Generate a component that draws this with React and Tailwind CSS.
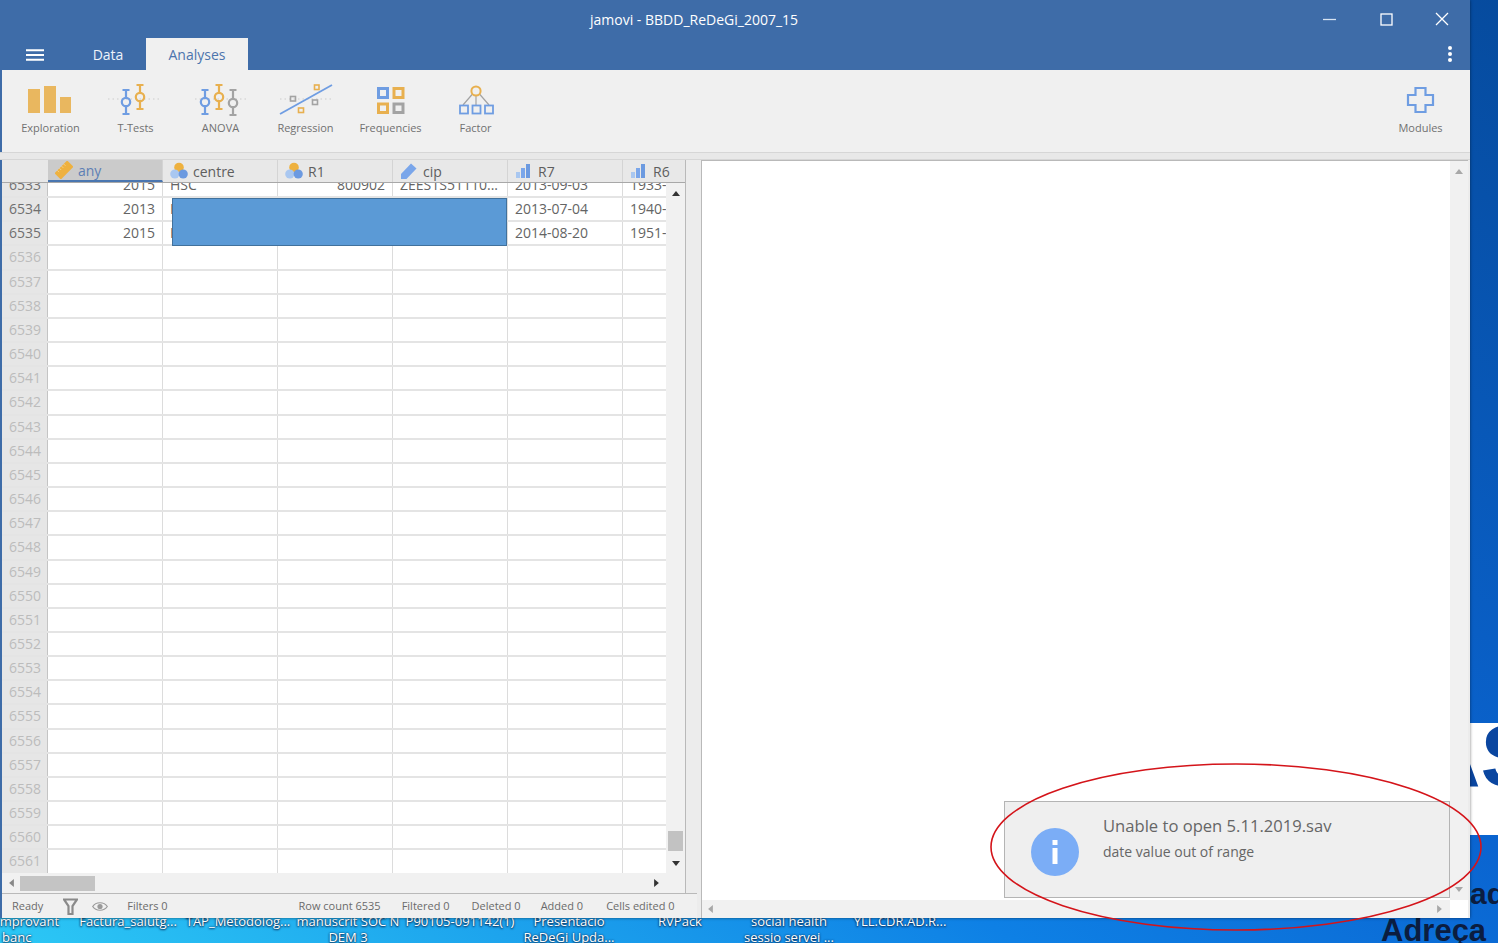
import React from 'react';

const uiFont = 'font-["Open_Sans","Noto_Sans",sans-serif]';

const columns = [
  { name: 'any', type: 'ordinal', active: true },
  { name: 'centre', type: 'nominal' },
  { name: 'R1', type: 'nominal' },
  { name: 'cip', type: 'id' },
  { name: 'R7', type: 'continuous' },
  { name: 'R6', type: 'continuous', narrow: true },
];

const filledRows = {
  6533: ['2015', 'HSC', '800902', 'ZEES1S51110...', '2013-09-03', '1933-'],
  6534: ['2013', 'H', '', '', '2013-07-04', '1940-'],
  6535: ['2015', 'H', '', '', '2014-08-20', '1951-'],
};

const rowNumbers = Array.from({ length: 30 }, (_, i) => 6533 + i);

const desktopLabels = [
  { cls: 'left-[-4px] w-[62px] text-left', second: 'pl-[6px]', text: ['Improvant', 'banc'] },
  { cls: 'left-[78px] w-[100px]', text: ['Factura_salutg...', ''] },
  { cls: 'left-[178px] w-[120px]', text: ['TAP_Metodolog...', ''] },
  { cls: 'left-[290px] w-[116px]', text: ['manuscrit SOC N', 'DEM 3'] },
  { cls: 'left-[400px] w-[120px]', text: ['P90105-091142(1)', ''] },
  { cls: 'left-[514px] w-[110px]', text: ['Presentacio', 'ReDeGi Upda...'] },
  { cls: 'left-[640px] w-[80px]', text: ['RVPack', ''] },
  { cls: 'left-[734px] w-[110px]', text: ['social health', 'sessio servei ...'] },
  { cls: 'left-[845px] w-[110px]', text: ['YLL.CDR.AD.R...', ''] },
];

function Stem({ x, top, bottom, cy, color }) {
  return (
    <g stroke={color} strokeWidth="2.2" fill="none">
      <path d={`M${x - 3.5} ${top}H${x + 3.5}M${x - 3.5} ${bottom}H${x + 3.5}M${x} ${top}V${cy - 4}M${x} ${cy + 4}V${bottom}`} />
      <circle cx={x} cy={cy} r="4.2" />
    </g>
  );
}

function IconBox({ children }) {
  return (
    <svg width="85" height="36" viewBox="0 0 85 36" className="block">
      {children}
    </svg>
  );
}

const orange = '#e8b04f';
const blue = '#6f9de2';
const gray = '#a3a3a3';

const ribbon = [
  {
    label: 'Exploration',
    icon: (
      <IconBox>
        <rect x="20" y="5" width="12" height="24" fill={orange} opacity="0.9" />
        <rect x="36" y="2" width="12" height="27" fill={orange} opacity="0.9" />
        <rect x="52" y="13" width="11" height="16" fill={orange} opacity="0.9" />
      </IconBox>
    ),
  },
  {
    label: 'T-Tests',
    icon: (
      <IconBox>
        <path d="M15 15H69" stroke="#ccc" strokeDasharray="1.5 3" />
        <Stem x={33} top={6} bottom={30} cy={18} color={blue} />
        <Stem x={47} top={1} bottom={25} cy={13} color={orange} />
      </IconBox>
    ),
  },
  {
    label: 'ANOVA',
    icon: (
      <IconBox>
        <path d="M17 15H68" stroke="#ccc" strokeDasharray="1.5 3" />
        <Stem x={27} top={6} bottom={30} cy={18} color={blue} />
        <Stem x={41} top={1} bottom={25} cy={13} color={orange} />
        <Stem x={55} top={6} bottom={31} cy={19} color={gray} />
      </IconBox>
    ),
  },
  {
    label: 'Regression',
    icon: (
      <IconBox>
        <path d="M17 15H69" stroke="#ccc" strokeDasharray="1.5 3" />
        <path d="M17 30L69 1" stroke={blue} strokeWidth="1.8" />
        <g fill="none" strokeWidth="1.6">
          <rect x="27.5" y="12.5" width="5" height="4.5" stroke={gray} />
          <rect x="51.5" y="1" width="4.5" height="4.5" stroke={orange} />
          <rect x="49.5" y="16" width="5" height="4.5" stroke={gray} />
          <rect x="35.5" y="24" width="5" height="4.5" stroke={orange} />
        </g>
      </IconBox>
    ),
  },
  {
    label: 'Frequencies',
    icon: (
      <IconBox>
        <g fill="none" strokeWidth="3">
          <rect x="30.5" y="4.5" width="9" height="9" stroke={blue} />
          <rect x="46" y="4.5" width="9" height="9" stroke={orange} />
          <rect x="30.5" y="20" width="9" height="8.5" stroke={orange} />
          <rect x="46" y="20" width="9" height="8.5" stroke={gray} />
        </g>
      </IconBox>
    ),
  },
  {
    label: 'Factor',
    icon: (
      <IconBox>
        <path d="M43 12V21M39.5 10L30 21M46.5 10L56 21" stroke={gray} strokeWidth="1.2" fill="none" />
        <circle cx="43" cy="7" r="4.6" fill="#f0f0f0" stroke={orange} strokeWidth="2" />
        <g fill="#f0f0f0" stroke={blue} strokeWidth="1.8">
          <rect x="27" y="21.5" width="8" height="8" />
          <rect x="39.5" y="21.5" width="8" height="8" />
          <rect x="52" y="21.5" width="8" height="8" />
        </g>
      </IconBox>
    ),
  },
];

function RibbonButton({ label, icon }) {
  return (
    <div className="flex w-[85px] flex-col items-center pt-[14px]">
      {icon}
      <span className="text-[11px] leading-[16px] text-[#707070]">{label}</span>
    </div>
  );
}

function ColumnIcon({ type }) {
  if (type === 'ordinal') {
    return (
      <svg width="18" height="18" viewBox="0 0 18 18" className="shrink-0">
        <g transform="rotate(-45 9 9)">
          <rect x="0" y="4.5" width="18" height="9" rx="0.6" fill="#eeb13f" />
          <path d="M4 4.5v2.5M7 4.5v2.5M10 4.5v2.5M13 4.5v2.5" stroke="#fff" strokeOpacity="0.45" strokeWidth="0.8" />
        </g>
      </svg>
    );
  }
  if (type === 'nominal') {
    return (
      <svg width="18" height="18" viewBox="0 0 18 18" className="shrink-0">
        <circle cx="9" cy="5.5" r="4.8" fill="#eeb13f" />
        <circle cx="4.8" cy="12" r="4.6" fill="#a9c7f0" />
        <circle cx="13.2" cy="12" r="4.6" fill="#6c9ae0" />
      </svg>
    );
  }
  if (type === 'id') {
    return (
      <svg width="18" height="18" viewBox="0 0 18 18" className="shrink-0">
        <path d="M1 12L11 1.5L16.5 6.5L6.5 17L1 17Z" fill="#7aa6ea" />
      </svg>
    );
  }
  return (
    <svg width="18" height="18" viewBox="0 0 18 18" className="shrink-0">
      <rect x="1" y="10" width="4" height="6" fill="#a9c7f0" />
      <rect x="6" y="6" width="4" height="10" fill="#7aa6ea" />
      <rect x="11" y="2" width="4" height="14" fill="#6c9ae0" />
    </svg>
  );
}

function Triangle({ dir, className }) {
  const shapes = {
    up: 'M0 6L5 0L10 6Z',
    down: 'M0 0L10 0L5 6Z',
    left: 'M6 0V10L0 5Z',
    right: 'M0 0V10L6 5Z',
  };
  const vertical = dir === 'up' || dir === 'down';
  return (
    <svg width={vertical ? 8 : 5} height={vertical ? 5 : 8} viewBox={vertical ? '0 0 10 6' : '0 0 6 10'} className={className}>
      <path d={shapes[dir]} fill="currentColor" />
    </svg>
  );
}

function DataTable() {
  return (
    <div className="flex h-[690px]">
      <div className="w-[665px] overflow-hidden bg-white">
        <div className="-mt-[9px]">
          {rowNumbers.map((n) => {
            const cells = filledRows[n];
            return (
              <div key={n} className="flex h-[24.16px] border-b-2 border-[#e4e4e4] text-[14px] leading-[22px] text-[#646464]">
                <div className={`w-[46px] shrink-0 border-r border-[#c4c4c4] bg-[#e6e6e6] pl-[7px] ${cells ? 'text-[#707070]' : 'text-[#bcbcbc]'}`}>
                  {n}
                </div>
                {columns.map((c, i) => (
                  <div
                    key={c.name}
                    className={`overflow-hidden whitespace-nowrap border-r border-[#dcdcdc] px-[7px] ${c.narrow ? 'w-[44px] shrink-0 border-r-0' : 'w-[115px] shrink-0'} ${i === 0 || i === 2 ? 'text-right' : 'text-left'}`}
                  >
                    {cells ? cells[i] : ''}
                  </div>
                ))}
              </div>
            );
          })}
        </div>
      </div>
      <div className="flex w-[19px] flex-col items-center bg-[#f1f1f1] text-[#333]">
        <Triangle dir="up" className="mt-[8px]" />
        <div className="mt-[635px] h-[20px] w-[15px] bg-[#c2c2c2]" />
        <Triangle dir="down" className="mt-[10px]" />
      </div>
    </div>
  );
}

function App() {
  return (
    <div className={`relative h-[943px] w-[1498px] overflow-hidden bg-[linear-gradient(to_top_right,#2cc8f5_0%,#0e80e5_34%,#0a64d0_55%,#064b9e_100%)] ${uiFont}`}>
      {/* wallpaper bits that stick out behind the window */}
      <div className="absolute left-[1400px] top-[723px] h-[112px] w-[98px] overflow-hidden bg-white">
        <span className="absolute left-[17px] top-[-17px] font-['Liberation_Sans',sans-serif] text-[88px] font-bold leading-[100px] text-[#0a46a0]">AS</span>
      </div>
      <span className="absolute left-[1470px] top-[876px] font-['Liberation_Sans',sans-serif] text-[30px] font-bold leading-[36px] text-[#0b1d40]">ad</span>
      <span className="absolute left-[1381px] top-[913px] font-['Liberation_Sans',sans-serif] text-[31px] font-bold leading-[36px] text-[#0b1d40]">Adreça</span>

      {desktopLabels.map((l) => (
        <div key={l.text[0]} className={`absolute top-[913px] text-center text-[13px] leading-[16px] text-white [text-shadow:0_0_2px_#0a2a55,0_1px_2px_#0a2a55] ${l.cls}`}>
          <div className="whitespace-nowrap">{l.text[0]}</div>
          <div className={`whitespace-nowrap ${l.second || ''}`}>{l.text[1]}</div>
        </div>
      ))}

      {/* jamovi window */}
      <div className="absolute left-0 top-0 flex h-[918px] w-[1470px] flex-col bg-[#ececec] shadow-[0_0_3px_rgba(0,0,0,0.5)]">
        <div className="flex h-[38px] items-center bg-[#3e6ca8] text-white">
          <span className="ml-[590px] text-[14px]">jamovi - BBDD_ReDeGi_2007_15</span>
          <div className="ml-auto flex h-full">
            <div className="flex w-[57px] items-center justify-center">
              <svg width="13" height="13" viewBox="0 0 13 13"><path d="M0 6.5H13" stroke="#d8e4f2" strokeWidth="1.3" /></svg>
            </div>
            <div className="flex w-[56px] items-center justify-center">
              <svg width="13" height="13" viewBox="0 0 13 13"><rect x="1" y="1" width="11" height="11" fill="none" stroke="#fff" strokeWidth="1.3" /></svg>
            </div>
            <div className="flex w-[56px] items-center justify-center">
              <svg width="14" height="14" viewBox="0 0 14 14"><path d="M1 1L13 13M13 1L1 13" stroke="#fff" strokeWidth="1.3" /></svg>
            </div>
          </div>
        </div>

        <div className="flex h-[32px] items-stretch bg-[#3e6ca8] text-[14px]">
          <div className="flex w-[70px] items-center pl-[26px] pt-[2px]">
            <svg width="18" height="12" viewBox="0 0 18 12"><path d="M0 1.2H18M0 6H18M0 10.8H18" stroke="#fff" strokeWidth="2" /></svg>
          </div>
          <div className="flex w-[76px] items-center justify-center text-[#eef3fa]">Data</div>
          <div className="flex w-[102px] items-center justify-center bg-[#f0f0f0] text-[#4c74ad]">Analyses</div>
          <div className="ml-auto mr-[18px] flex flex-col justify-center gap-[2px]">
            <span className="size-[4px] rounded-full bg-white" />
            <span className="size-[4px] rounded-full bg-white" />
            <span className="size-[4px] rounded-full bg-white" />
          </div>
        </div>

        <div className="flex h-[82px] border-l-2 border-[#3e6ca8] bg-[#f0f0f0] pl-[6px]">
          {ribbon.map((b) => (
            <RibbonButton key={b.label} label={b.label} icon={b.icon} />
          ))}
          <div className="ml-auto mr-[7px]">
            <RibbonButton
              label="Modules"
              icon={
                <IconBox>
                  <path d="M37.5 4H47.5V11H55V21H47.5V28H37.5V21H30V11H37.5Z" fill="none" stroke={blue} strokeWidth="2.2" />
                </IconBox>
              }
            />
          </div>
        </div>

        <div className="h-[8px] border-y border-[#d6d6d6] bg-[#e8e8e8]" />

        <div className="flex min-h-0 flex-1 border-l-2 border-[#3e6ca8]">
          {/* spreadsheet */}
          <div className="flex w-[695px] flex-col">
            <div className="w-[684px] border-r border-[#b9b9b9]">
              <div className="flex h-[23px] border-b border-[#a8a8a8] bg-[#e8e8e8] text-[14px] leading-[23px] text-[#5e5e5e]">
                <div className="w-[46px] shrink-0" />
                {columns.map((c) => (
                  <div
                    key={c.name}
                    className={`flex shrink-0 items-center gap-[5px] overflow-hidden pl-[7px] ${c.narrow ? 'w-[62px]' : 'w-[115px] border-r border-[#d4d4d4]'} ${c.active ? 'border-b-2 border-b-[#4a76b0] bg-[#cbcbcb] text-[#5d7fb5]' : ''}`}
                  >
                    <ColumnIcon type={c.type} />
                    <span>{c.name}</span>
                  </div>
                ))}
              </div>
              <div className="relative">
                <DataTable />
                {/* blanked-out cells, drawn over the grid */}
                <div className="absolute left-[170px] top-[15px] h-[48px] w-[335px] border border-[#41719c] bg-[#5b9ad6]" />
              </div>
              <div className="flex h-[20px] items-center bg-[#f1f1f1] text-[#333]">
                <Triangle dir="left" className="ml-[7px] text-[#888]" />
                <div className="ml-[6px] h-[15px] w-[75px] bg-[#c4c4c4]" />
                <Triangle dir="right" className="ml-[559px]" />
              </div>
            </div>
            <div className="flex h-[25px] items-center border-t border-[#b9b9b9] bg-[#f0f0f0] text-[11px] text-[#6b6b6b]">
              <span className="ml-[10px]">Ready</span>
              <svg width="15" height="17" viewBox="0 0 15 17" className="ml-[20px]">
                <path d="M1 1.5H14L9.5 8V16H5.5V8Z" fill="none" stroke="#8a8a8a" strokeWidth="2.2" />
              </svg>
              <svg width="16" height="11" viewBox="0 0 16 11" className="ml-[14px]">
                <path d="M0.7 5.5C4 0.5 12 0.5 15.3 5.5C12 10.5 4 10.5 0.7 5.5Z" fill="none" stroke="#999" strokeWidth="1.2" />
                <circle cx="8" cy="5.5" r="2.6" fill="#999" />
              </svg>
              <span className="ml-[19px]">Filters 0</span>
              <span className="ml-[131px]">Row count 6535</span>
              <span className="ml-[21px]">Filtered 0</span>
              <span className="ml-[22px]">Deleted 0</span>
              <span className="ml-[20px]">Added 0</span>
              <span className="ml-[23px]">Cells edited 0</span>
            </div>
          </div>

          {/* results */}
          <div className="relative ml-[4px] flex w-[767px] flex-col border-l border-t border-[#b9b9b9] bg-white">
            <div className="flex min-h-0 flex-1">
              <div className="flex-1" />
              <div className="flex w-[18px] flex-col items-center justify-between bg-[#f1f1f1] py-[8px] text-[#a8a8a8]">
                <Triangle dir="up" />
                <Triangle dir="down" />
              </div>
            </div>
            <div className="flex h-[18px] items-center bg-[#f1f1f1] text-[#a8a8a8]">
              <Triangle dir="left" className="ml-[6px]" />
              <Triangle dir="right" className="ml-[724px]" />
              <div className="ml-auto h-full w-[18px] bg-white" />
            </div>

            <div className="absolute bottom-[20px] right-[18px] flex h-[97px] w-[446px] border border-[#b4b4b4] bg-[#efefef]">
              <div className="ml-[26px] mt-[26px] flex size-[48px] items-center justify-center rounded-full bg-[#7badf6]">
                <svg width="8" height="24" viewBox="0 0 8 24">
                  <rect x="1.5" y="0" width="5" height="5" fill="#fff" />
                  <rect x="1.5" y="8" width="5" height="16" fill="#fff" />
                </svg>
              </div>
              <div className="ml-[24px] mt-[12px]">
                <div className="text-[16.6px] leading-[24px] text-[#666]">Unable to open 5.11.2019.sav</div>
                <div className="mt-[4px] text-[14px] leading-[20px] text-[#666]">date value out of range</div>
              </div>
            </div>
          </div>
        </div>
      </div>

      {/* hand-drawn marker around the message */}
      <svg width="1498" height="943" viewBox="0 0 1498 943" className="pointer-events-none absolute left-0 top-0">
        <ellipse cx="1236" cy="847" rx="245" ry="83" fill="none" stroke="#d4141a" strokeWidth="1.6" />
      </svg>
    </div>
  );
}

export default App;
